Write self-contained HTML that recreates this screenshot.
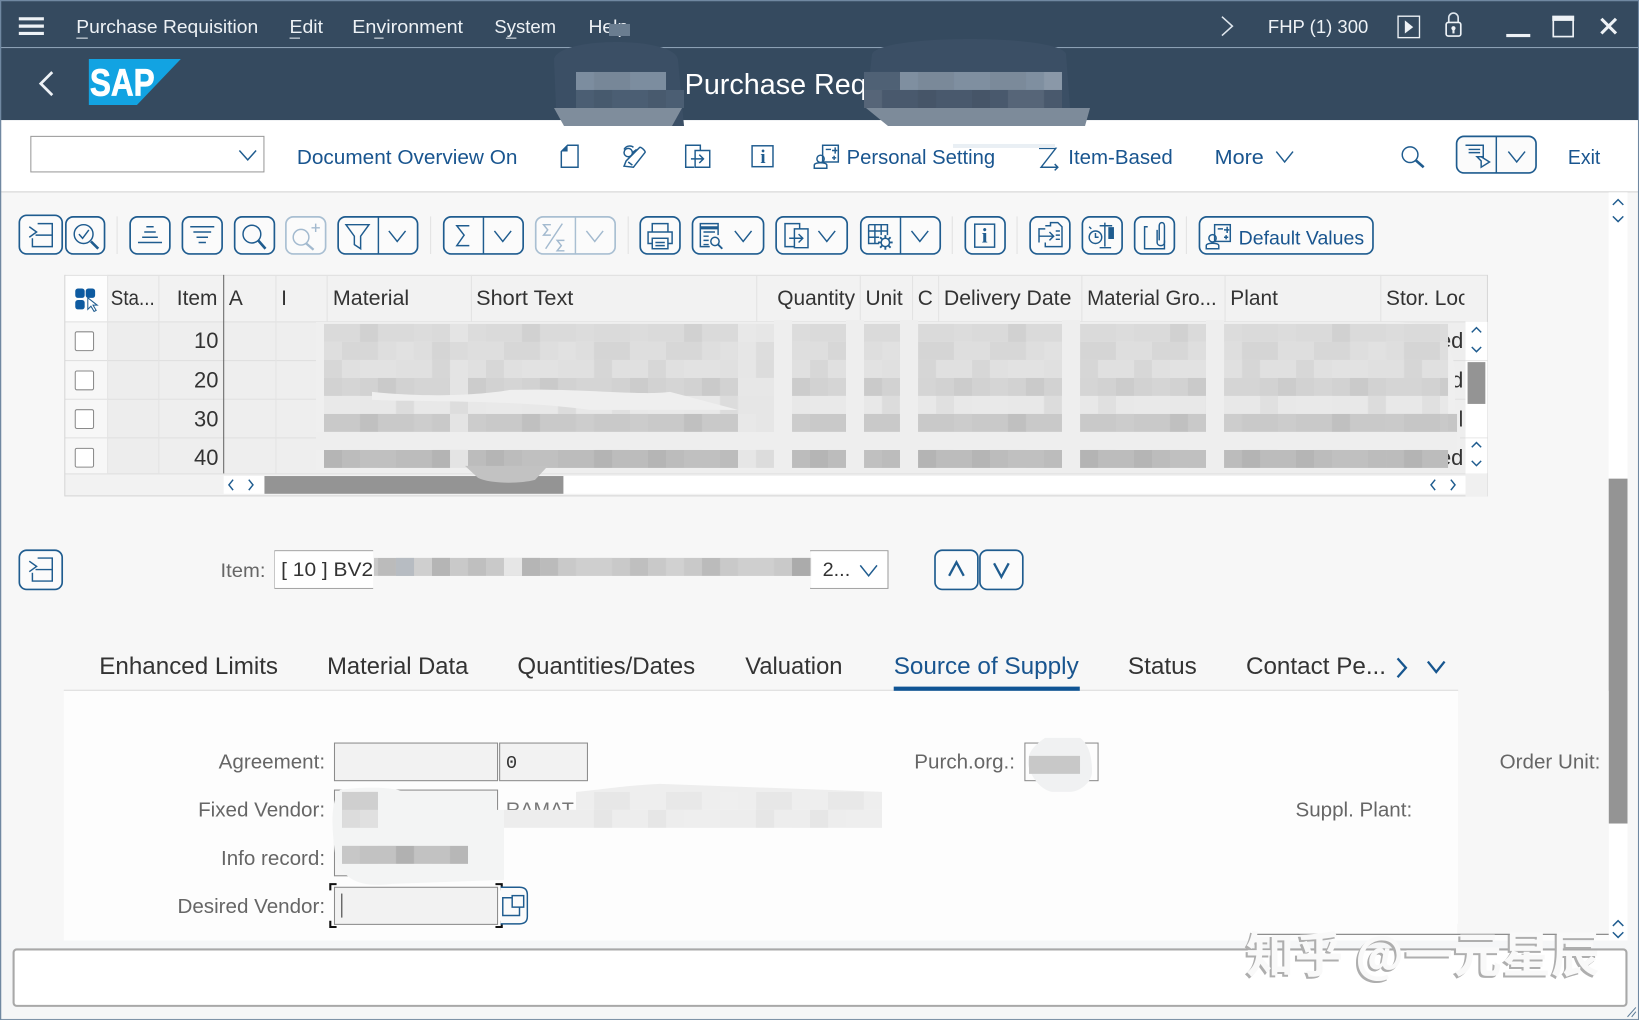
<!DOCTYPE html>
<html><head><meta charset="utf-8"><title>Purchase Requisition</title>
<style>
html,body{margin:0;padding:0;background:#f7f7f7;overflow:hidden}
svg{display:block;font-family:"Liberation Sans","Noto Sans CJK SC",sans-serif}
.b{fill:#fbfbfb;stroke:#1f5c8f;stroke-width:1.6}
.bd{fill:#fbfbfb;stroke:#a9bfd2;stroke-width:1.6}
.i{fill:none;stroke:#1f5c8f;stroke-width:1.4}
.id{fill:none;stroke:#a3bacf;stroke-width:1.4}
.m{fill:#eef2f6;font-size:18px}
.t{fill:#19558f;font-size:19.7px}
.h{fill:#333;font-size:20px}
.n{fill:#333;font-size:21px;text-anchor:end}
.l{fill:#666;font-size:19.7px;text-anchor:end}
.tab{fill:#333;font-size:23px}
.cb{fill:#fff;stroke:#8a8a8a;stroke-width:1}
.f{fill:#f2f2f2;stroke:#8b8b8b;stroke-width:1}
</style></head><body>
<svg xmlns="http://www.w3.org/2000/svg" width="1639" height="1020" viewBox="0 0 1568 976" preserveAspectRatio="none">
<defs>
<pattern id="tx" width="162" height="90" patternUnits="userSpaceOnUse">
<rect x="0" y="0" width="18" height="18" fill="#000" opacity=".07"/><rect x="36" y="0" width="36" height="18" fill="#fff" opacity=".12"/><rect x="108" y="0" width="18" height="18" fill="#000" opacity=".08"/>
<rect x="18" y="18" width="18" height="18" fill="#fff" opacity=".14"/><rect x="54" y="18" width="18" height="18" fill="#000" opacity=".07"/><rect x="90" y="18" width="36" height="18" fill="#fff" opacity=".1"/><rect x="144" y="18" width="18" height="18" fill="#000" opacity=".05"/>
<rect x="0" y="36" width="36" height="18" fill="#fff" opacity=".08"/><rect x="72" y="36" width="18" height="18" fill="#000" opacity=".09"/><rect x="126" y="36" width="18" height="18" fill="#000" opacity=".06"/>
<rect x="36" y="54" width="18" height="18" fill="#000" opacity=".08"/><rect x="90" y="54" width="18" height="18" fill="#fff" opacity=".12"/><rect x="144" y="54" width="18" height="18" fill="#fff" opacity=".1"/>
<rect x="18" y="72" width="36" height="18" fill="#000" opacity=".06"/><rect x="72" y="72" width="18" height="18" fill="#fff" opacity=".14"/><rect x="108" y="72" width="36" height="18" fill="#000" opacity=".07"/>
</pattern>
<g id="segs">
<rect x="324" width="126" height="18"/><rect x="468" width="270" height="18"/><rect x="792" width="54" height="18"/><rect x="864" width="36" height="18"/><rect x="918" width="144" height="18"/><rect x="1080" width="126" height="18"/><rect x="1224" width="162" height="18"/><rect x="1386" width="62" height="18"/>
</g>
<clipPath id="stor"><rect x="1321" y="263" width="80" height="45"/></clipPath>
<clipPath id="ram"><rect x="480" y="760" width="75" height="15.500"/></clipPath>
<g id="tog" class="i"><path d="M36 534H50V556H31V548M28 537L35 542L28 547M34 545H50"/></g>
</defs>

<rect width="1568" height="976" fill="#f7f7f7"/>
<!-- header -->
<rect width="1568" height="115" fill="#354a5f"/>
<rect width="1568" height="1.2" fill="#7088a1"/>
<rect y="45" width="1568" height="1" fill="#8ea2b6"/>
<rect y="115" width="1568" height="68" fill="#fff"/>
<rect y="183" width="1568" height="1.2" fill="#dadada"/>
<path d="M18 18H42M18 25H42M18 32H42" stroke="#eef2f6" stroke-width="3" fill="none"/>
<text class="m" x="73" y="31.500" textLength="174" lengthAdjust="spacingAndGlyphs">Purchase Requisition</text>
<text class="m" x="277" y="31.500" textLength="32" lengthAdjust="spacingAndGlyphs">Edit</text>
<text class="m" x="337" y="31.500" textLength="106" lengthAdjust="spacingAndGlyphs">Environment</text>
<text class="m" x="473" y="31.500" textLength="59" lengthAdjust="spacingAndGlyphs">System</text>
<text class="m" x="563" y="31.500" textLength="38" lengthAdjust="spacingAndGlyphs">Help</text>
<path d="M73 36.500H84M277 36.500H287M358 36.500H367M484 36.500H494" stroke="#eef2f6" stroke-width="1" fill="none"/>
<path d="M1169 16L1179 25L1169 34" stroke="#dfe6ed" stroke-width="1.5" fill="none"/>
<text class="m" x="1213" y="31.500" textLength="96" lengthAdjust="spacingAndGlyphs">FHP (1) 300</text>
<rect x="1337.500" y="15.500" width="20.500" height="20.500" fill="none" stroke="#eef2f6" stroke-width="1.300"/>
<path d="M1344 19.500L1352 26L1344 32Z" fill="#eef2f6"/>
<path d="M1386 22V17a4.500 4.500 0 0 1 9 0V22" stroke="#dfe6ed" stroke-width="1.600" fill="none"/>
<rect x="1383.500" y="21.500" width="14" height="13" rx="2" fill="none" stroke="#eef2f6" stroke-width="1.600"/>
<circle cx="1390.500" cy="27" r="2" fill="#eef2f6"/><rect x="1389.500" y="27" width="2" height="5" fill="#eef2f6"/>
<rect x="1441" y="32.500" width="23" height="3" fill="#eef2f6"/>
<rect x="1486" y="16" width="19" height="19" fill="none" stroke="#eef2f6" stroke-width="1.600"/><rect x="1485" y="15" width="21" height="5" fill="#eef2f6"/>
<path d="M1532 18L1546 32M1546 18L1532 32" stroke="#eef2f6" stroke-width="3" fill="none"/>
<path d="M50 69L39 80L50 91" stroke="#eef2f6" stroke-width="2.600" fill="none"/>
<path d="M85 56.500H173L131 100.500H85Z" fill="#12a3e2"/>
<text x="86" y="91.500" font-size="36" font-weight="700" fill="#fff" stroke="#fff" stroke-width=".7" textLength="62" lengthAdjust="spacingAndGlyphs">SAP</text>
<text x="655" y="90" font-size="27.500" fill="#fff">Purchase Requisition</text>

<!-- toolbar -->
<rect x="29.500" y="130.500" width="223" height="34" fill="#fff" stroke="#9a9a9a"/>
<path d="M229 144L237 153L245 144" class="i" stroke-width="1"/>
<text class="t" x="284" y="157" textLength="211" lengthAdjust="spacingAndGlyphs">Document Overview On</text>
<path class="i" d="M543 139H553V160H537V145Z"/><path d="M543 139L537 145H543Z" fill="#1f5c8f"/>
<g class="i"><circle cx="601" cy="146" r="4"/><path d="M605 146L609 143M597 143C599 139 604 139 606 141M613 141C615 142 618 145 617 146L606 160L597 159L599 154L612 141Z"/><path d="M601 155L605 158"/></g>
<g class="i"><path d="M664 160H656V139H670V144M665 144H679V160H665Z"/><path d="M661 152H673M669 148L673 152L669 156"/></g>
<rect x="719.500" y="139.500" width="20" height="20" class="i"/><text x="729.500" y="156" font-family="Liberation Serif" font-weight="700" font-size="18" fill="#1f5c8f" text-anchor="end" dx="3">i</text>
<g class="i"><rect x="787" y="139" width="15" height="16"/><path d="M790 143H795M799 141V147M796 144H801M798 149V153M796 151H800"/><circle cx="785" cy="152" r="3.500"/><path d="M779 161V158C779 155 791 155 791 158V161Z"/></g>
<text class="t" x="810" y="157" textLength="142" lengthAdjust="spacingAndGlyphs">Personal Setting</text>
<path class="i" d="M994 142H1010L996 160H1012M1009 157L1012 160L1009 163"/>
<text class="t" x="1022" y="157" textLength="100" lengthAdjust="spacingAndGlyphs">Item-Based</text>
<text class="t" x="1162" y="157" textLength="47" lengthAdjust="spacingAndGlyphs">More</text>
<path class="i" d="M1221 145L1229 155L1237 145"/>
<circle cx="1349" cy="148" r="7.500" class="i"/><path d="M1354.500 153.500L1362 160" stroke="#1f5c8f" stroke-width="2.500"/>
<rect x="1393.500" y="130.500" width="76" height="35" rx="7" class="b" fill="#fff"/><path d="M1431.500 130.500V165.500" stroke="#1f5c8f" stroke-width="1.400"/>
<path class="i" d="M1402 139H1419V150H1413L1417 154V160L1425 155L1417 150M1405 143H1416M1405 146H1416M1413 150L1417 154"/>
<path class="i" d="M1443 145L1451 155L1459 145"/>
<text class="t" x="1500" y="157" textLength="31" lengthAdjust="spacingAndGlyphs">Exit</text>

<!-- page scrollbar -->
<rect x="1539" y="184" width="18" height="716" fill="#fff"/>
<rect x="1539" y="458" width="18" height="330" fill="#949494"/>
<path class="i" d="M1543 196L1548 191L1553 196M1543 207L1548 212L1553 207M1543 886L1548 881L1553 886M1543 892L1548 897L1553 892"/>

<!-- buttons row -->
<g>
<rect x="18.500" y="206" width="41" height="37" rx="7" class="b"/>
<use href="#tog" y="-320"/>
<rect x="63" y="207.500" width="37" height="35.500" rx="7" class="b"/>
<g class="i"><circle cx="80" cy="224" r="9"/><path d="M75.500 224L79 228L85 220"/><path d="M87 231L94 238" stroke-width="2.500"/></g>
<path d="M112 207V243M412 207V243M601 207V243M911 207V243M973 207V243M1135 207V243" stroke="#e2e2e2" stroke-width="1"/>
<rect x="124.500" y="207.500" width="38" height="35.500" rx="7" class="b"/>
<path class="i" d="M140 217H147M138 222H149M136 227H151M132 232H155"/>
<rect x="174.500" y="207.500" width="38" height="35.500" rx="7" class="b"/>
<path class="i" d="M182 217H205M185 222H202M188 227H199M190 232H197"/>
<rect x="224.500" y="207.500" width="38" height="35.500" rx="7" class="b"/>
<circle cx="241" cy="224" r="8.500" class="i"/><path d="M247 230L254 238" stroke="#1f5c8f" stroke-width="2.500"/>
<rect x="273.500" y="207.500" width="38" height="35.500" rx="7" class="bd"/>
<circle cx="288" cy="227" r="7.500" class="id"/><path d="M293 233L300 239" stroke="#a3bacf" stroke-width="2.200"/><path class="id" d="M302 214V222M298 218H306"/>
<rect x="323.500" y="207.500" width="76" height="35.500" rx="7" class="b"/><path d="M362 207.500V243" stroke="#1f5c8f" stroke-width="1.400"/>
<path class="i" d="M331 215H353L345 226V238L339 234V226Z"/>
<path class="i" d="M372 221L380 231L388 221"/>
<rect x="424.500" y="207.500" width="76" height="35.500" rx="7" class="b"/><path d="M462.500 207.500V243" stroke="#1f5c8f" stroke-width="1.400"/>
<path class="i" d="M449 216H437L444 225L437 235H449"/>
<path class="i" d="M473 221L481 231L489 221"/>
<rect x="512.500" y="207.500" width="76" height="35.500" rx="7" class="bd"/><path d="M550.500 207.500V243" stroke="#a9bfd2" stroke-width="1.400"/>
<path class="id" d="M527 215H520L524 220L520 225H527M540 230H533L537 235L533 240H540M522 238L538 214"/>
<path class="id" d="M561 221L569 231L577 221"/>
<rect x="612.500" y="207.500" width="38" height="35.500" rx="7" class="b"/>
<g class="i"><path d="M624 222V214H639V222M624 233H620V222H643V233H639"/><rect x="624" y="228" width="15" height="10"/><path d="M627 232H636M627 235H636"/></g>
<rect x="662.500" y="207.500" width="68" height="35.500" rx="7" class="b"/>
<g class="i"><path d="M679 236H670V214H687V225"/><path d="M670 218H687" stroke-width="3"/><path d="M673 222H684M673 226H678M673 230H678M673 234H678"/><circle cx="684" cy="231" r="4"/><path d="M687 234L691 238" stroke-width="1.800"/></g>
<path class="i" d="M703 221L711 231L719 221"/>
<rect x="742.500" y="207.500" width="68" height="35.500" rx="7" class="b"/>
<g class="i"><path d="M760 236H751V214H765V219M760 219H773V237H760Z"/><path d="M755 228H768M764 224L768 228L764 232"/></g>
<path class="i" d="M783 221L791 231L799 221"/>
<rect x="823.500" y="207.500" width="76" height="35.500" rx="7" class="b"/><path d="M861.500 207.500V243" stroke="#1f5c8f" stroke-width="1.400"/>
<g class="i"><path d="M831 215H849V225M831 215V233H841M837 215V233M843 215V225M831 221H849M831 227H841"/><circle cx="847" cy="232" r="4"/><path d="M847 225V228M847 236V239M840 232H843M851 232H854M842 227L844 229M850 235L852 237M852 227L850 229M842 237L844 235" stroke-width="1.800"/></g>
<path class="i" d="M872 221L880 231L888 221"/>
<rect x="923.500" y="207.500" width="38" height="35.500" rx="7" class="b"/>
<rect x="932.500" y="214.500" width="19" height="22" class="i"/><text x="942" y="232" font-family="Liberation Serif" font-weight="700" font-size="20" fill="#1f5c8f" text-anchor="middle">i</text>
<rect x="985.500" y="207.500" width="38" height="35.500" rx="7" class="b"/>
<g class="i"><path d="M1000 216H1005V213H1012L1016 217V236H1000V232"/><path d="M994 232V219H1000M994 226H1008M1004 222L1008 226L1004 230M1010 221H1014M1010 225H1014M1010 229H1014"/></g>
<rect x="1035.500" y="207.500" width="38" height="35.500" rx="7" class="b"/>
<g class="i"><circle cx="1048" cy="227" r="6"/><path d="M1048 223V227H1051M1044 219L1042 217M1057 213V236M1052 237H1063M1052 216H1064"/><path d="M1061 218V228H1065V218Z" fill="#1f5c8f"/></g>
<rect x="1085.500" y="207.500" width="38" height="35.500" rx="7" class="b"/>
<g class="i"><path d="M1098 217H1095V238H1114V230"/><path d="M1107 220V232C1107 236 1114 236 1114 232V216C1114 212 1109 212 1109 216V230"/></g>
<rect x="1147.500" y="207.500" width="166" height="35.500" rx="7" class="b"/>
<g class="i"><rect x="1162" y="215" width="15" height="16"/><path d="M1165 219H1170M1174 217V223M1171 220H1176M1173 225V229M1171 227H1175"/><circle cx="1160" cy="228" r="3.500"/><path d="M1154 238V235C1154 232 1166 232 1166 235V238Z"/></g>
<text x="1185" y="234" font-size="18.500" fill="#19558f" textLength="120" lengthAdjust="spacingAndGlyphs">Default Values</text>
</g>

<!-- table -->
<rect x="62" y="263" width="1361" height="212" fill="#eee"/>
<rect x="62" y="263" width="1361" height="45" fill="#f2f2f2"/>
<rect x="62" y="263" width="41" height="45" fill="#fdfdfd"/>
<rect x="62" y="308" width="41" height="145" fill="#f7f7f7"/>
<rect x="103" y="308" width="49" height="145" fill="#ededed"/>
<rect x="152" y="308" width="62" height="145" fill="#eee"/>
<rect x="214" y="308" width="1188" height="145" fill="#eee"/>
<path d="M62 263.500H1423M62 308H1402M62 345H1402M62 382H1402M62 419H1402M62 453.500H1402" stroke="#e0e0e0" stroke-width="1"/>
<path d="M103 263V453M152 263V453M264 263V453M313 263V308M451 263V308M724 263V308M823 263V308M873 263V308M898 263V308M1035 263V308M1172 263V308M1321 263V308" stroke="#e3e3e3" stroke-width="1"/>
<path d="M214 263V453" stroke="#666" stroke-width="1"/>
<rect x="72" y="276" width="9" height="9" rx="2.500" fill="#0d5aa0"/><rect x="82" y="276" width="9" height="9" rx="2.500" fill="#0d5aa0"/><rect x="72" y="287" width="9" height="9" rx="2.500" fill="#0d5aa0"/>
<path d="M84 285L84 296L87 293L90 298L92 297L89 292L93 292Z" fill="#fff" stroke="#1f5c8f" stroke-width="1"/>
<text class="h" x="106" y="292" textLength="42" lengthAdjust="spacingAndGlyphs">Sta...</text>
<text class="h" x="208" y="292" text-anchor="end">Item</text>
<text class="h" x="219" y="292">A</text>
<text class="h" x="269" y="292">I</text>
<text class="h" x="318.500" y="292" textLength="73" lengthAdjust="spacingAndGlyphs">Material</text>
<text class="h" x="455.500" y="292" textLength="93" lengthAdjust="spacingAndGlyphs">Short Text</text>
<text class="h" x="818" y="292" text-anchor="end">Quantity</text>
<text class="h" x="828" y="292">Unit</text>
<text class="h" x="878" y="292">C</text>
<text class="h" x="903" y="292" textLength="122" lengthAdjust="spacingAndGlyphs">Delivery Date</text>
<text class="h" x="1040" y="292" textLength="124" lengthAdjust="spacingAndGlyphs">Material Gro...</text>
<text class="h" x="1177" y="292">Plant</text>
<text class="h" x="1326" y="292" clip-path="url(#stor)">Stor. Loc</text>
<rect x="72" y="317.500" width="17.500" height="18" rx="1.500" class="cb"/><rect x="72" y="355" width="17.500" height="18" rx="1.500" class="cb"/><rect x="72" y="392" width="17.500" height="18" rx="1.500" class="cb"/><rect x="72" y="429" width="17.500" height="18" rx="1.500" class="cb"/>
<text class="n" x="209" y="333">10</text><text class="n" x="209" y="371">20</text><text class="n" x="209" y="408">30</text><text class="n" x="209" y="445">40</text>
<!-- h scroll -->
<rect x="62" y="454" width="1340" height="21" fill="#f2f2f2"/>
<rect x="214" y="455.500" width="1188" height="17" fill="#fff"/>
<rect x="253" y="455.500" width="286" height="17" fill="#949494"/>
<path class="i" d="M223 459L219 464L223 469M238 459L242 464L238 469M1373 459L1369 464L1373 469M1388 459L1392 464L1388 469" stroke-width="1.300"/>
<rect x="62" y="474" width="1361" height="1" fill="#d6d6d6"/>
<path d="M1423 263V475" stroke="#d6d6d6"/><path d="M62 263V475" stroke="#d6d6d6"/>
<!-- v scroll -->
<rect x="1402" y="308" width="21" height="145" fill="#fff"/>
<rect x="1402" y="453" width="21" height="22" fill="#f0f0f0"/>
<rect x="1404" y="346.500" width="17" height="40" fill="#949494"/>
<path class="i" d="M1408 318L1412.500 313.500L1417 318M1408 332L1412.500 336.500L1417 332M1408 428L1412.500 423.500L1417 428M1408 441L1412.500 445.500L1417 441" stroke-width="1.400"/>
<path d="M1402 345H1423M1402 419H1423" stroke="#e8e8e8"/>

<text fill="#333" font-size="21" text-anchor="end" x="1400" y="333">ed</text>
<text fill="#333" font-size="21" text-anchor="end" x="1400" y="371">ed</text>
<text fill="#333" font-size="21" text-anchor="end" x="1400" y="408">d</text>
<text fill="#333" font-size="21" text-anchor="end" x="1400" y="445">ed</text>

<!-- mosaic, original pixel grid -->
<g transform="scale(.9567)">
<path d="M316 322H1390C1420 322 1450 326 1455 370V410H1460V450H1430V470H316Z" fill="#efefef"/>
<use href="#segs" y="324" fill="#dadada"/>
<use href="#segs" y="342" fill="#dedede"/>
<use href="#segs" y="360" fill="#e0e0e0"/>
<use href="#segs" y="378" fill="#d2d2d2"/>
<use href="#segs" y="396" fill="#e8e8e8"/>
<use href="#segs" y="414" fill="#c9c9c9"/>
<use href="#segs" y="450" fill="#bcbcbc"/>
<rect x="1386" y="414" width="71" height="18" fill="#c6c6c6"/>
<rect x="450" y="324" width="18" height="144" fill="#e4e4e4"/><rect x="738" y="324" width="36" height="144" fill="#e6e6e6"/>
<rect x="324" y="324" width="1124" height="144" fill="url(#tx)" opacity=".55"/>
<path d="M846 320V470H864V320ZM900 320V470H918V320ZM1062 320V470H1080V320ZM1206 320V470H1224V320ZM774 320V470H792V320Z" fill="#eeeeee"/>
<rect x="316" y="432" width="1140" height="18" fill="#eeeeee"/>
<path d="M372 392C430 398 480 395 510 390C580 388 640 396 670 392L738 410H590C520 400 430 402 372 400Z" fill="#efefef"/>
<path d="M465 466H548L535 480C520 484 490 484 478 478Z" fill="#c2c2c2"/>
<!-- item mosaic -->
<path d="M374 538H780L815 540L820 592H374Z" fill="#f7f7f7"/>
<rect x="374" y="558" width="438" height="18" fill="#c9c9c9"/>
<rect x="374" y="558" width="438" height="18" fill="url(#tx)"/>
<rect x="396" y="558" width="18" height="18" fill="#b7bcc2"/><rect x="432" y="558" width="18" height="18" fill="#b5b5b5"/><rect x="522" y="558" width="18" height="18" fill="#b5b5b5"/><rect x="792" y="558" width="18" height="18" fill="#ababab"/><rect x="504" y="558" width="18" height="18" fill="#e6e6e6"/>
<!-- title mosaics -->
<path d="M554 60C556 36 676 36 678 60L684 126H570L556 108Z" fill="#3b4f65"/>
<rect x="576" y="72" width="90" height="18" fill="#7c8d9f"/><rect x="576" y="90" width="108" height="18" fill="#4b5e73"/>
<path d="M554 108H682L672 126H564Z" fill="#7f8d9c"/>
<rect x="576" y="72" width="90" height="36" fill="url(#tx)" opacity=".6"/>
<rect x="609" y="24" width="21" height="12" fill="#6a7d90"/>
<path d="M872 54C880 34 1060 34 1066 54L1070 108H866Z" fill="#3b4f65"/>
<rect x="864" y="72" width="198" height="18" fill="#7f8fa0"/><rect x="864" y="90" width="198" height="18" fill="#49596d"/>
<rect x="864" y="72" width="198" height="36" fill="url(#tx)" opacity=".6"/>
<rect x="864" y="72" width="36" height="18" fill="#4f6175"/>
<path d="M866 108H1090L1085 126H888Z" fill="#7d8b9a"/>
<rect x="953" y="144" width="102" height="4" fill="#e9eff4"/>
</g>

<!-- Item row -->
<rect x="18.500" y="526.500" width="41" height="37.500" rx="7" class="b"/>
<use href="#tog"/>
<text x="254" y="552" text-anchor="end" font-size="18.500" fill="#666" textLength="43" lengthAdjust="spacingAndGlyphs">Item:</text>
<path d="M357 527H263V563H357M775 527H849.500V563H775" fill="none" stroke="#9a9a9a"/>
<rect x="263" y="527.500" width="94" height="35" fill="#fff"/><rect x="776" y="527.500" width="73" height="35" fill="#fff"/>
<text x="269" y="551" font-size="19" fill="#333" textLength="88" lengthAdjust="spacingAndGlyphs">[ 10 ] BV2</text>
<text x="787" y="551" font-size="19" fill="#333">2...</text>
<path class="i" d="M823 541L831 551L839 541" stroke-width="1"/>
<rect x="894.500" y="526.500" width="41" height="37.500" rx="7" class="b"/>
<rect x="937.500" y="526.500" width="41" height="37.500" rx="7" class="b"/>
<path d="M908 551L915 538L922 551M951 539L958 552L965 539" fill="none" stroke="#1f5c8f" stroke-width="2.200"/>

<!-- Tabs -->
<rect x="61" y="660" width="1334" height="1.200" fill="#dcdcdc"/>
<rect x="61" y="661" width="1334" height="239" fill="#fdfdfd"/>
<text class="tab" x="95" y="645" textLength="171" lengthAdjust="spacingAndGlyphs">Enhanced Limits</text>
<text class="tab" x="313" y="645" textLength="135" lengthAdjust="spacingAndGlyphs">Material Data</text>
<text class="tab" x="495" y="645" textLength="170" lengthAdjust="spacingAndGlyphs">Quantities/Dates</text>
<text class="tab" x="713" y="645" textLength="93" lengthAdjust="spacingAndGlyphs">Valuation</text>
<text class="tab" x="855" y="645" style="fill:#19558f" textLength="177" lengthAdjust="spacingAndGlyphs">Source of Supply</text>
<text class="tab" x="1079" y="645" textLength="66" lengthAdjust="spacingAndGlyphs">Status</text>
<text class="tab" x="1192" y="645" textLength="134" lengthAdjust="spacingAndGlyphs">Contact Pe...</text>
<rect x="855" y="657" width="178" height="4" fill="#0f5494"/>
<path d="M1337 630L1345 639L1337 648M1366 633L1374 643L1382 633" fill="none" stroke="#17568f" stroke-width="2.200"/>

<!-- Fields -->
<text class="l" x="311" y="735.500">Agreement:</text>
<text class="l" x="311" y="781.500">Fixed Vendor:</text>
<text class="l" x="311" y="827.500">Info record:</text>
<text class="l" x="311" y="873.500">Desired Vendor:</text>
<text class="l" x="971" y="735.500">Purch.org.:</text>
<text class="l" x="1531" y="735.500">Order Unit:</text>
<text class="l" x="1351" y="781.500">Suppl. Plant:</text>
<rect x="320" y="711" width="156" height="36" class="f"/>
<rect x="478" y="711" width="84" height="36" class="f"/>
<text x="484" y="735" font-family="Liberation Mono" font-size="18" fill="#333">0</text>
<rect x="320" y="756" width="156" height="82" fill="#f5f5f5" stroke="#8b8b8b"/>
<rect x="980.500" y="711" width="70" height="36" fill="#fdfdfd" stroke="#8b8b8b"/>
<text x="484" y="781" font-size="19" fill="#777" clip-path="url(#ram)">RAMAT</text>
<g transform="scale(.9567)">
<path d="M340 790C370 786 395 788 404 792H496V810H504L504 880L392 884C360 888 345 880 336 860C330 820 332 800 340 790Z" fill="#f3f4f4"/>
<rect x="342" y="792" width="36" height="36" fill="#dcdcdc"/><rect x="342" y="792" width="36" height="36" fill="url(#tx)"/>
<rect x="342" y="846" width="126" height="18" fill="#c2c2c2"/><rect x="342" y="846" width="126" height="18" fill="url(#tx)"/>
<path d="M576 792C600 790 620 786 660 784L882 792V810H576Z" fill="#eeeeee"/>
<rect x="504" y="810" width="378" height="18" fill="#ededed"/>
<rect x="576" y="792" width="306" height="36" fill="url(#tx)" opacity=".4"/>
<path d="M1045 738H1080C1090 745 1092 760 1092 772C1092 782 1080 792 1070 792H1052C1040 790 1030 775 1028 765C1027 752 1035 745 1045 738Z" fill="#f0f1f2"/>
<rect x="1029" y="756" width="51" height="18" fill="#c8c8c8"/>
</g>
<rect x="320" y="849" width="156" height="35.500" class="f"/>
<path d="M327 855V878" stroke="#333" stroke-width="1"/>
<path d="M322 846H316V852M474 846H480V852M322 887H316V881M474 887H480V881" fill="none" stroke="#111" stroke-width="2"/>
<path d="M479 849H497Q504.500 849 504.500 856V877Q504.500 884 497 884H479" fill="#fbfbfb" stroke="#1f5c8f" stroke-width="1.400"/>
<path class="i" d="M490 859H481V876H497V868"/><rect x="490" y="857" width="11" height="11" class="i"/>

<!-- status bar -->
<rect x="0" y="900" width="1568" height="76" fill="#f5f6f7"/>
<rect x="1394" y="890" width="145" height="10" fill="#fdfdfd"/>
<rect x="1395" y="661" width="144" height="233" fill="#f7f7f7"/>
<text class="l" x="1531" y="735.500">Order Unit:</text>
<rect x="1394" y="884" width="145" height="10" fill="#f7f7f7"/>
<rect x="1199" y="893.500" width="340" height="1" fill="#777"/>
<rect x="13" y="908.500" width="1543" height="54" rx="3" fill="#fff" stroke="#a8a8a8" stroke-width="2"/>
<path d="M1557 973L1565 964M1561 973L1565 968" stroke="#5e7d99" stroke-width="1"/>
<rect y="975" width="1568" height="1" fill="#7e93a8"/>
<rect x="0" width="1.200" height="976" fill="#7088a1"/>
<rect x="1567" width="1" height="976" fill="#7088a1"/>

<!-- watermark -->
<text x="1190" y="932" font-family="Noto Sans CJK SC,Liberation Sans,sans-serif" font-size="46" font-weight="700" fill="#aeaeae" textLength="338" lengthAdjust="spacing">知乎 @一元星辰</text>
<text x="1192" y="930" font-family="Noto Sans CJK SC,Liberation Sans,sans-serif" font-size="46" font-weight="700" fill="#f9f9f9" textLength="338" lengthAdjust="spacing">知乎 @一元星辰</text>
</svg>
</body></html>
